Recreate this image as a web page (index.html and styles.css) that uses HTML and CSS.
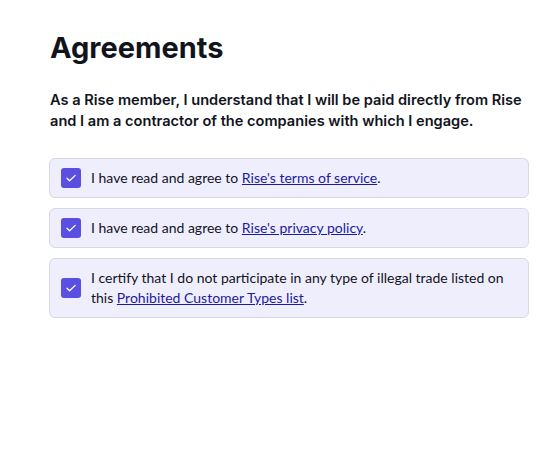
FILE: index.html
```html
<!DOCTYPE html>
<html lang="en">
<head>
    <meta charset="UTF-8">
    <meta name="viewport" content="width=device-width, initial-scale=1.0">
    <title>Agreements</title>
    <link rel="stylesheet" href="styles.css">
</head>
<body>
    <div class="page">
        <h1 class="title">Agreements</h1>
        <p class="intro">As a Rise member, I understand that I will be paid directly from Rise and I am a contractor of the companies with which I engage.</p>
        <div class="agreements">
            <label class="agreement">
                <span class="check">
                    <svg viewBox="0 0 20 20" width="20" height="20"><path d="M6 10.2l2.6 2.6L14.2 7.4" fill="none" stroke="#fff" stroke-width="1.3" stroke-linecap="round" stroke-linejoin="round"/></svg>
                </span>
                <span class="agreement-text">I have read and agree to <a href="#">Rise's terms of service</a>.</span>
            </label>
            <label class="agreement">
                <span class="check">
                    <svg viewBox="0 0 20 20" width="20" height="20"><path d="M6 10.2l2.6 2.6L14.2 7.4" fill="none" stroke="#fff" stroke-width="1.3" stroke-linecap="round" stroke-linejoin="round"/></svg>
                </span>
                <span class="agreement-text">I have read and agree to <a href="#">Rise's privacy policy</a>.</span>
            </label>
            <label class="agreement">
                <span class="check">
                    <svg viewBox="0 0 20 20" width="20" height="20"><path d="M6 10.2l2.6 2.6L14.2 7.4" fill="none" stroke="#fff" stroke-width="1.3" stroke-linecap="round" stroke-linejoin="round"/></svg>
                </span>
                <span class="agreement-text">I certify that I do not participate in any type of illegal trade listed on this <a href="#">Prohibited Customer Types list</a>.</span>
            </label>
        </div>
    </div>
</body>
</html>
```

FILE: styles.css
```css
body, html {
    margin: 0;
    background: #ffffff;
    font-family: Lato, "Noto Sans", sans-serif;
    color: #12141d;
}
.page {
    width: 480px;
    padding: 30px 0 0 49px;
}
.title {
    margin: 0;
    font-family: Inter, Lato, sans-serif;
    font-size: 29px;
    font-weight: 700;
    line-height: 36px;
    padding-left: 1px;
}
.intro {
    width: 490px;
    margin: 24px 0 0;
    padding-left: 1px;
    font-family: Inter, Lato, sans-serif;
    font-size: 14.6px;
    font-weight: 600;
    line-height: 21px;
}
.agreements {
    display: flex;
    flex-direction: column;
    gap: 10px;
    margin-top: 26px;
}
.agreement {
    display: flex;
    align-items: center;
    gap: 10px;
    padding: 9px 12px 9px 11px;
    min-height: 20px;
    background: #efeefd;
    border: 1px solid #d8d8e2;
    border-radius: 6px;
}
.check {
    flex: none;
    width: 20px;
    height: 20px;
    border-radius: 3px;
    background: #5a4fe0;
    display: flex;
}
.agreement-text {
    font-size: 14px;
    line-height: 20px;
}
.agreement-text a {
    color: #1c1aa0;
}
```
